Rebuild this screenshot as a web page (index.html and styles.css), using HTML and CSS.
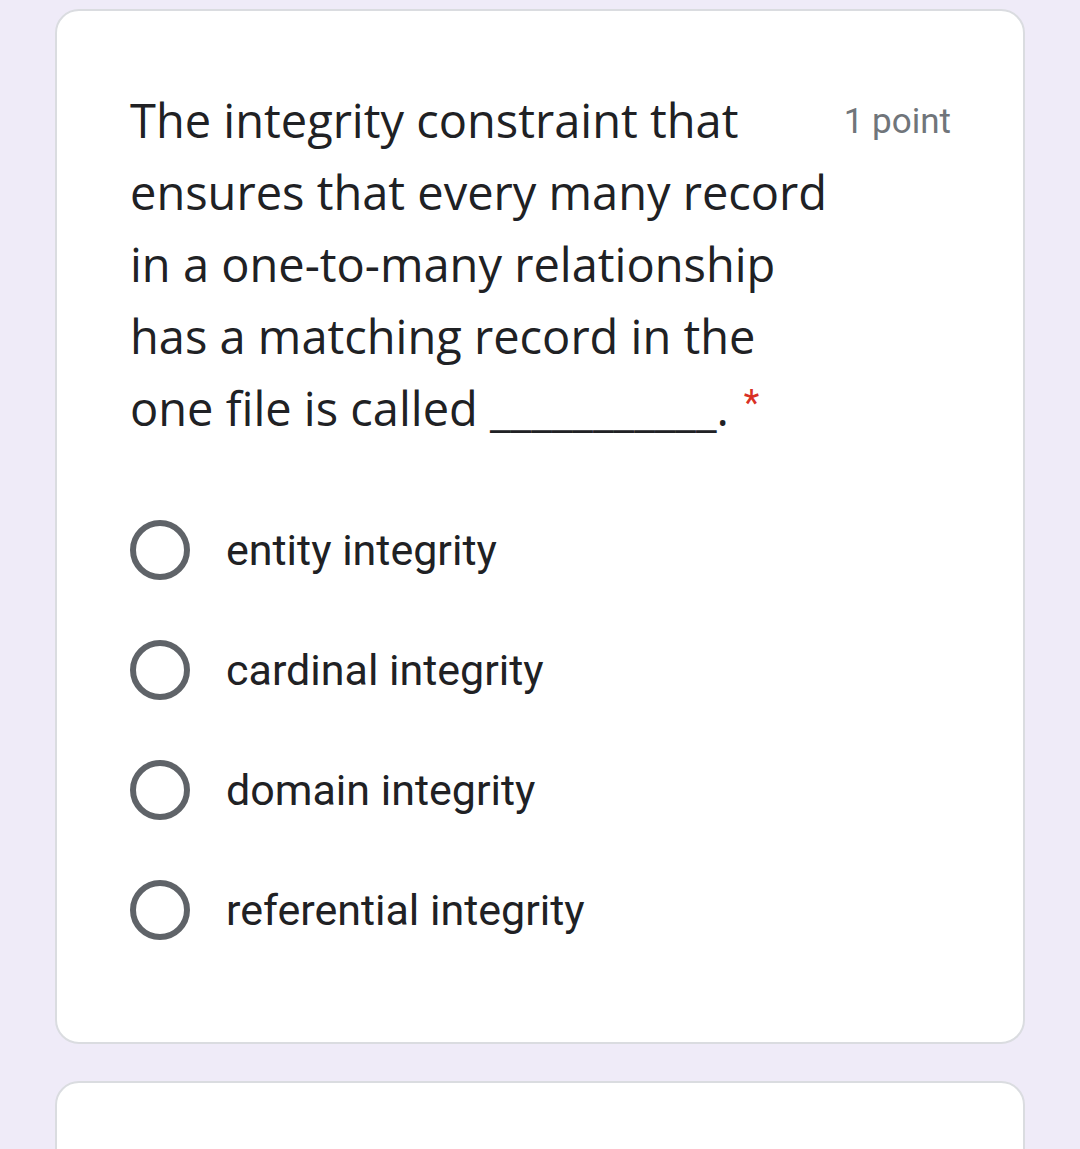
FILE: index.html
```html
<!DOCTYPE html>
<html>

<head>
    <meta charset="utf-8" />
    <title>Quiz question</title>
    <link rel="stylesheet" href="styles.css">
</head>

<body>
    <div class="form">
        <div class="card">
            <div class="question_head">
                <div class="question_title">
                    The integrity constraint that<br>
                    ensures that every many record<br>
                    in a one-to-many relationship<br>
                    has a matching record in the<br>
                    one file is called ___________.<span class="required">*</span>
                </div>
                <div class="points">1 point</div>
            </div>
            <ul class="options">
                <li><span class="radio"></span><span class="label">entity integrity</span></li>
                <li><span class="radio"></span><span class="label">cardinal integrity</span></li>
                <li><span class="radio"></span><span class="label">domain integrity</span></li>
                <li><span class="radio"></span><span class="label">referential integrity</span></li>
            </ul>
        </div>
        <div class="card card_next"></div>
    </div>
</body>

</html>
```
FILE: styles.css
```css
/* reset */

* {
    margin: 0;
    padding: 0;
    box-sizing: border-box;
}

html,
body {
    height: 100%;
}

body {
    background: #efebf8;
    color: #202124;
    font-family: 'Roboto', 'Liberation Sans', sans-serif;
    overflow: hidden;
}

ul {
    list-style: none;
}

/* cards */

.form {
    padding: 9px 55px 0 55px;
    display: flex;
    flex-direction: column;
    gap: 37px;
}

.card {
    background: #fff;
    border: 2px solid #dadce0;
    border-radius: 24px;
    padding: 73px 72px 72px 73px;
}

.card_next {
    height: 200px;
}

/* question */

.question_head {
    display: flex;
    justify-content: space-between;
    align-items: flex-start;
}

.question_title {
    font-family: 'Open Sans', 'Lato', sans-serif;
    font-size: 47px;
    line-height: 72px;
    color: #202124;
}

.required {
    color: #d93025;
    font-family: 'Roboto', sans-serif;
    font-size: 36px;
    margin-left: 15px;
    vertical-align: 11px;
    line-height: 0;
}

.points {
    font-size: 35px;
    line-height: 72px;
    color: #70757a;
    padding-top: 2px;
}

/* options */

.options {
    margin-top: 46px;
}

.options li {
    display: flex;
    align-items: center;
    height: 120px;
}

.radio {
    width: 60px;
    height: 60px;
    border: 6px solid #5f6368;
    border-radius: 50%;
    flex: none;
}

.label {
    margin-left: 36px;
    font-size: 43px;
    color: #202124;
}
```
